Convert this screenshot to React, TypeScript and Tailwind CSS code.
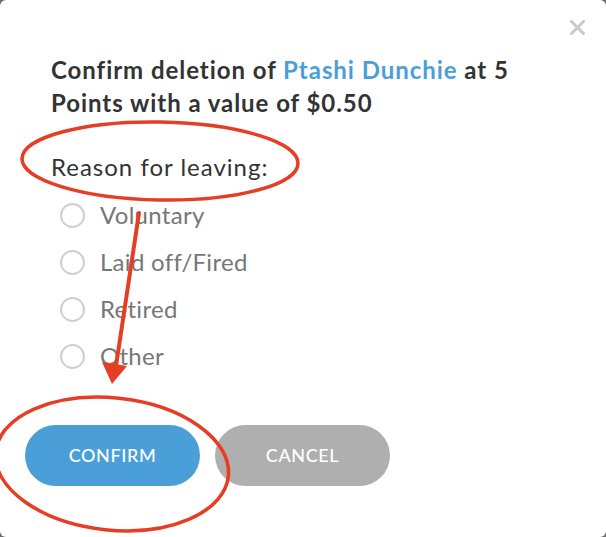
import React from "react";

const reasons = ["Voluntary", "Laid off/Fired", "Retired", "Other"];

export default function App() {
  return (
    <div className="w-[606px] h-[537px] bg-[#6b6b6b] overflow-hidden" style={{ fontFamily: "Lato, 'Noto Sans', sans-serif" }}>
      <div className="relative w-full h-full bg-white rounded-[6px] flex flex-col">
        <div className="flex justify-end pt-[20px] pr-[21px] h-[37px]">
          <svg width="15" height="15" viewBox="0 0 15 15">
            <path d="M1.5 1.5 L13.5 13.5 M13.5 1.5 L1.5 13.5" stroke="#c9c9c9" strokeWidth="3" strokeLinecap="square" />
          </svg>
        </div>
        <div className="pl-[51px] pr-[20px] pt-[16px]">
          <h2 className="text-[24px] leading-[33px] font-bold text-[#333333] tracking-[0.95px]">
            Confirm deletion of <span className="text-[#4a9fd9]">Ptashi Dunchie</span> at 5<br />Points with a value of $0.50
          </h2>
          <p className="mt-[31px] text-[24px] leading-[33px] text-[#333333] tracking-[1px]">Reason for leaving:</p>
          <div className="mt-[18px] flex flex-col gap-[19px] pl-[9px]">
            {reasons.map((r) => (
              <label key={r} className="flex items-center gap-[15px] h-[28px]">
                <span className="w-[25px] h-[25px] rounded-full border-2 border-[#cfcfcf] bg-white" />
                <span className="text-[24px] text-[#777777] tracking-[0.3px]">{r}</span>
              </label>
            ))}
          </div>
        </div>
        <div className="flex gap-[15px] pl-[25px] mt-[55px]">
          <button className="w-[175px] h-[61px] rounded-full bg-[#4a9fd8] text-white text-[18px] font-medium tracking-[0.6px]">CONFIRM</button>
          <button className="w-[175px] h-[61px] rounded-full bg-[#afafaf] text-white text-[18px] font-medium tracking-[0.6px]">CANCEL</button>
        </div>
        <svg className="absolute inset-0 pointer-events-none" width="606" height="537" viewBox="0 0 606 537">
          <ellipse cx="160" cy="161" rx="138" ry="39" fill="none" stroke="#e63d25" strokeWidth="3.5" transform="rotate(1 160 161)" />
          <ellipse cx="112" cy="464" rx="117" ry="66" fill="none" stroke="#e63d25" strokeWidth="3.5" transform="rotate(6 112 464)" />
          <line x1="139" y1="213" x2="116" y2="366" stroke="#e63d25" strokeWidth="4" strokeLinecap="round" />
          <polygon points="102,362 127,366 112,384" fill="#e63d25" />
        </svg>
      </div>
    </div>
  );
}
